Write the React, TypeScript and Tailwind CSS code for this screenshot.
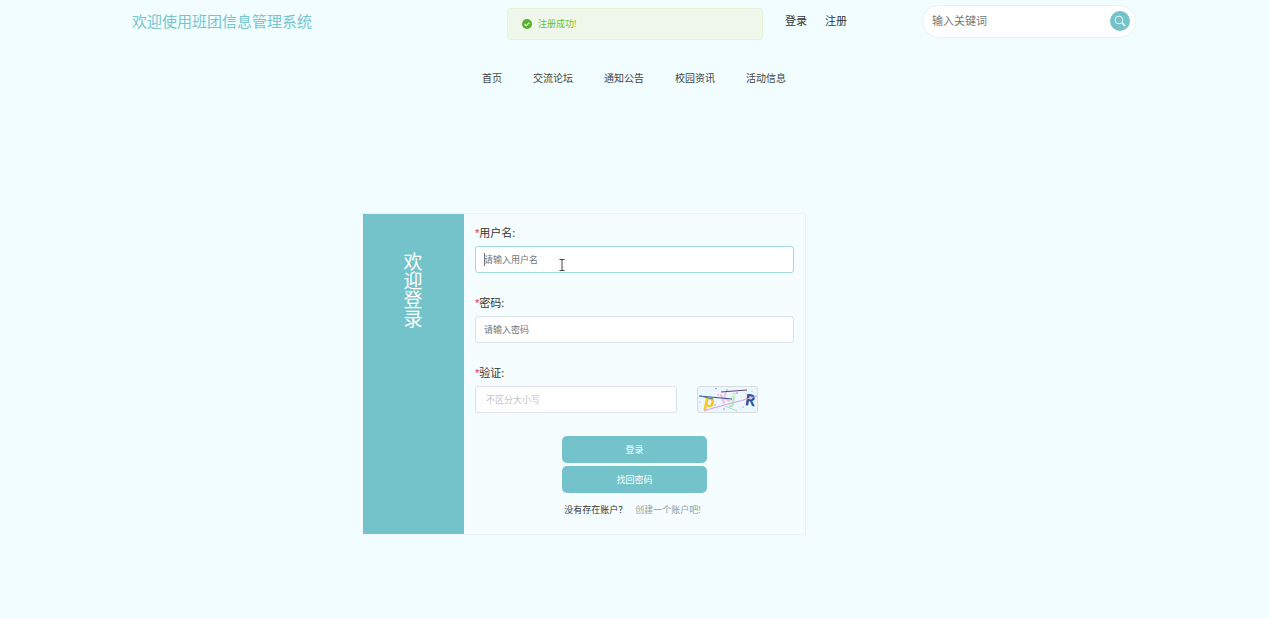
import React from "react";

const navItems = ["首页", "交流论坛", "通知公告", "校园资讯", "活动信息"];

function SuccessToast() {
  return (
    <div
      role="status"
      className="absolute left-1/2 top-2 flex h-8 w-64 -translate-x-1/2 items-center gap-[6px] rounded-[3px] border border-[#e4f3dc] bg-[#eff7ea] px-[14px] text-[9px] leading-4 text-[#67c23a]"
    >
      <svg viewBox="0 0 10 10" className="size-[10px]" aria-hidden="true">
        <circle cx="5" cy="5" r="5" fill="#58b12f" />
        <path d="M2.6 5l1.7 1.7 3.1-3.1" fill="none" stroke="#eff7ea" strokeWidth="1.1" />
      </svg>
      <p>注册成功!</p>
    </div>
  );
}

function Header() {
  return (
    <header className="pr-[2px]">
      <div className="mx-auto flex h-[42px] max-w-[1004px] items-center">
        <h1 className="text-[15px] leading-5 text-[#76c5cc]">欢迎使用班团信息管理系统</h1>
        <div className="ml-auto flex gap-[18px] text-[11px] leading-4 text-[#333]">
          <a href="#login">登录</a>
          <a href="#register">注册</a>
        </div>
        <form
          className="ml-[75px] flex h-[33px] w-[214px] items-center rounded-full border border-[#e8f2f4] bg-white pl-[9px] pr-[5px]"
          onSubmit={(e) => e.preventDefault()}
        >
          <input
            type="search"
            aria-label="输入关键词"
            placeholder="输入关键词"
            className="min-w-0 flex-1 bg-transparent text-[11px] leading-4 outline-none placeholder:text-[#757575]"
          />
          <button
            type="submit"
            aria-label="搜索"
            className="flex size-5 items-center justify-center rounded-full bg-[#74c2ca]"
          >
            <svg viewBox="0 0 12 12" className="size-3" fill="none" stroke="#fff" aria-hidden="true">
              <circle cx="5" cy="5" r="3.9" strokeWidth="0.8" />
              <path d="M8 8l3.2 3" strokeWidth="1.3" />
            </svg>
          </button>
        </form>
      </div>
      <nav className="mt-7 flex justify-center gap-[31px] text-[10px] leading-4 text-[#444]">
        {navItems.map((item) => (
          <a key={item} href="#nav">
            {item}
          </a>
        ))}
      </nav>
    </header>
  );
}

function FieldLabel({ id, text }: { id: string; text: string }) {
  return (
    <label htmlFor={id} className="mb-[5px] block text-[11px] leading-4 text-[#333]">
      <span className="font-['Liberation_Sans',sans-serif] text-[#f03030]">*</span>
      {text}:
    </label>
  );
}

function Captcha() {
  return (
    <button
      type="button"
      aria-label="刷新验证码"
      className="h-[27px] w-[61px] rounded-[3px] border border-[#d5dde3] bg-[#edf5fd]"
    >
      <svg
        viewBox="0 0 59 25"
        className="block h-full w-full overflow-visible font-['Open_Sans','Noto_Sans',sans-serif]"
        fontWeight="700"
        aria-hidden="true"
      >
        <text x="6" y="20" fontSize="17" fill="#f5c91e" transform="rotate(12 11 16)">p</text>
        <text x="22" y="16" fontSize="14" fill="#f3bfe4" transform="rotate(-22 27 11)">K</text>
        <text x="33" y="17" fontSize="15" fill="#b4ecb4" transform="rotate(10 36 12)">j</text>
        <text x="47" y="19" fontSize="16" fill="#2b559c" transform="rotate(8 53 14)">R</text>
        <g fill="none" strokeWidth="1">
          <path d="M1 9l33 3" stroke="#36528b" />
          <path d="M2 9l13 3" stroke="#4b8797" />
          <path d="M23 5l26-2" stroke="#5b477b" />
          <path d="M6 24c14-5 31-8 53-15" stroke="#d3a1dd" />
          <path d="M27 19l12 5" stroke="#a5e6c0" />
        </g>
        <g fill="#7474b8">
          <circle cx="18" cy="1.5" r=".7" />
          <circle cx="39" cy="6" r=".7" />
          <circle cx="26" cy="22" r=".7" />
          <circle cx="45" cy="20" r=".6" />
        </g>
        <g fill="#e478a5">
          <circle cx="2" cy="15" r=".6" />
          <circle cx="20" cy="8" r=".7" />
          <circle cx="49" cy="7" r=".6" />
        </g>
        <g fill="#60bd91">
          <circle cx="29" cy="3" r=".7" />
          <circle cx="54" cy="4" r=".6" />
          <circle cx="17" cy="18" r=".7" />
        </g>
      </svg>
    </button>
  );
}

function LoginCard() {
  return (
    <section className="flex w-[443px] border border-l-0 border-[#e9f2f4] bg-[#f6fdff]">
      <div className="flex w-[101px] shrink-0 justify-center bg-[#74c2ca] pr-1 pt-[38px]">
        <h2 className="text-[19px] leading-5 text-white [writing-mode:vertical-rl]">欢迎登录</h2>
      </div>
      <form className="min-w-0 flex-1 px-[11px] pb-[17px] pt-[11px]" onSubmit={(e) => e.preventDefault()}>
        <div className="relative mb-[22px]">
          <FieldLabel id="username" text="用户名" />
          <input
            id="username"
            type="text"
            placeholder="请输入用户名"
            className="block h-[27px] w-full rounded-[3px] border border-[#a5d8dd] bg-white px-2 text-[9px] text-[#333] outline-none placeholder:text-[#757575]"
          />
          <span className="absolute bottom-[7px] left-[9px] h-[13px] w-px bg-[#777]" aria-hidden="true" />
          <svg viewBox="0 0 6 12" className="absolute bottom-[2px] left-[84px] h-3 w-[6px]" aria-hidden="true">
            <path d="M.5.5h5M.5 11.5h5M3 .5v11" stroke="#444" strokeWidth="1" fill="none" />
          </svg>
        </div>
        <div className="mb-[22px]">
          <FieldLabel id="password" text="密码" />
          <input
            id="password"
            type="password"
            placeholder="请输入密码"
            className="block h-[27px] w-full rounded-[3px] border border-[#d9e2e8] bg-white px-2 text-[9px] text-[#333] outline-none placeholder:text-[#757575]"
          />
        </div>
        <div className="mb-[23px]">
          <FieldLabel id="captcha" text="验证" />
          <div className="flex gap-5">
            <input
              id="captcha"
              type="text"
              placeholder="不区分大小写"
              className="block h-[27px] w-[202px] rounded-[3px] border border-[#dde3ea] bg-white px-[10px] text-[9px] text-[#333] outline-none placeholder:text-[#bfc4cd]"
            />
            <Captcha />
          </div>
        </div>
        <div className="mx-auto flex w-[145px] flex-col gap-[3px] text-[9px] text-white">
          <button type="submit" className="h-[27px] rounded-[5px] bg-[#74c2ca]">
            登录
          </button>
          <button type="button" className="h-[27px] rounded-[5px] bg-[#74c2ca]">
            找回密码
          </button>
        </div>
        <p className="mt-[10px] flex justify-center gap-2 pr-1 text-[9px] leading-[14px] text-[#333]">
          没有存在账户？
          <a href="#register" className="text-[#999]">
            创建一个账户吧!
          </a>
        </p>
      </form>
    </section>
  );
}

export default function App() {
  return (
    <div className="relative min-h-screen bg-[#f1fdff] font-['Noto_Sans','Noto_Sans_CJK_SC',sans-serif]">
      <Header />
      <SuccessToast />
      <main className="mt-[127px] flex justify-center pb-20 pr-[101px]">
        <LoginCard />
      </main>
    </div>
  );
}
